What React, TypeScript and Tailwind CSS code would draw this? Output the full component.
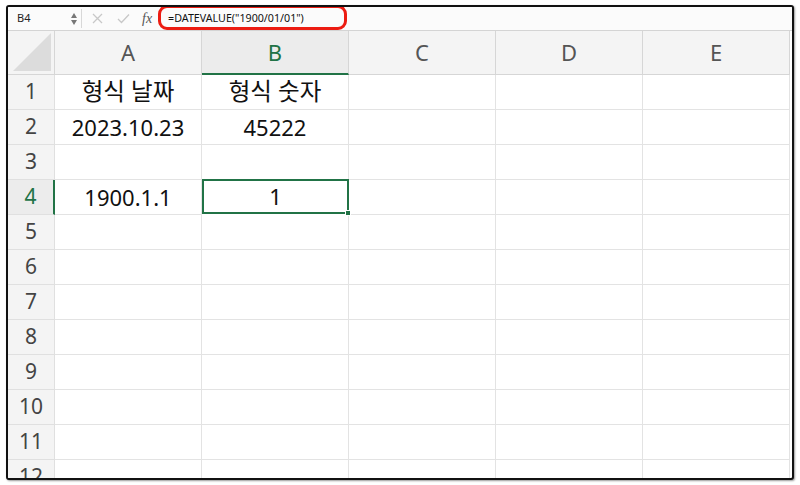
import React from "react";

const cols = ["A", "B", "C", "D", "E"];
const rows = [1, 2, 3, 4, 5, 6, 7, 8, 9, 10, 11, 12];
const data: Record<string, string> = {
  "1A": "형식 날짜",
  "1B": "형식 숫자",
  "2A": "2023.10.23",
  "2B": "45222",
  "4A": "1900.1.1",
  "4B": "1",
};

const font = { fontFamily: '"Noto Sans", "Noto Sans CJK KR", sans-serif' };

export default function App() {
  return (
    <div className="w-[800px] h-[485px] bg-white relative overflow-hidden" style={font}>
      <div className="absolute left-[6px] top-[5px] w-[788px] h-[475px] border-2 border-[#111] rounded-[3px] overflow-hidden bg-white shadow-[1px_1px_2px_rgba(0,0,0,0.4)]">
        {/* formula bar */}
        <div className="h-[24px] flex items-center bg-[#fbfbfb] border-b border-[#d4d4d4] relative">
          <div className="w-[73px] flex items-center justify-between pl-[9px] pr-[4px] h-full">
            <span className="text-[11px] text-[#222]">B4</span>
            <div className="flex flex-col items-center leading-none">
              <svg width="6" height="5" viewBox="0 0 6 5"><path d="M0 5 L3 0 L6 5Z" fill="#777" /></svg>
              <svg width="6" height="5" viewBox="0 0 6 5" className="mt-[2px]"><path d="M0 0 L3 5 L6 0Z" fill="#777" /></svg>
            </div>
          </div>
          <div className="w-px h-[19px] bg-[#d8d8d8]" />
          <div className="flex items-center ml-[10px] gap-[14px]">
            <svg width="11" height="11" viewBox="0 0 11 11"><path d="M1 1 L10 10 M10 1 L1 10" stroke="#c8c8c8" strokeWidth="1.3" /></svg>
            <svg width="13" height="11" viewBox="0 0 13 11"><path d="M1 6 L4.5 9.5 L12 1.5" stroke="#c8c8c8" strokeWidth="1.3" fill="none" /></svg>
            <span className="text-[14px] italic text-[#555] -ml-[2px]" style={{ fontFamily: '"Liberation Serif", serif' }}>fx</span>
          </div>
          <span className="ml-[16px] text-[10.7px] text-[#111]">=DATEVALUE("1900/01/01")</span>
          <div className="absolute left-[150px] top-[-2px] w-[189px] h-[25px] border-[3px] border-[#ec1c12] rounded-[9px]" />
        </div>
        {/* grid */}
        <div className="grid grid-cols-[47px_147px_147px_147px_147px_147px]">
          {/* header row */}
          <div className="h-[44px] bg-[#f4f4f4] border-r border-b border-[#d6d6d6] relative">
            <svg className="absolute right-[3px] bottom-[3px]" width="38" height="38" viewBox="0 0 38 38"><path d="M38 0 L38 38 L0 38Z" fill="#dcdcdc" /></svg>
          </div>
          {cols.map((c) => (
            <div
              key={c}
              className={
                c === "B"
                  ? "h-[44px] bg-[#ececec] border-r border-[#d6d6d6] border-b-2 border-b-[#217346] flex items-center justify-center text-[22px] text-[#217346]"
                  : "h-[44px] bg-[#f4f4f4] border-r border-b border-[#d6d6d6] flex items-center justify-center text-[22px] text-[#555]"
              }
            >
              {c}
            </div>
          ))}
          {rows.map((r) => (
            <React.Fragment key={r}>
              <div
                className={
                  r === 4
                    ? "h-[35px] bg-[#ececec] border-b border-[#e0e0e0] border-r-2 border-r-[#217346] flex items-center justify-center text-[21px] text-[#217346]"
                    : "h-[35px] bg-[#f4f4f4] border-r border-b border-[#e0e0e0] flex items-center justify-center text-[21px] text-[#444]"
                }
              >
                {r}
              </div>
              {cols.map((c) => {
                const sel = r === 4 && c === "B";
                const v = data[`${r}${c}`] ?? "";
                const korean = r === 1 && v !== "";
                return (
                  <div
                    key={c}
                    className={
                      (sel
                        ? "h-[35px] border-2 border-[#217346] -mt-px flex items-center justify-center text-[#111] relative"
                        : "h-[35px] border-r border-b border-[#e3e3e3] flex items-center justify-center text-[#111]") +
                      (korean ? " text-[23.5px]" : " text-[22px]")
                    }
                  >
                    {v}
                    {sel && <div className="absolute right-[-4px] bottom-[-4px] w-[6px] h-[6px] bg-[#217346] border border-white" />}
                  </div>
                );
              })}
            </React.Fragment>
          ))}
        </div>
      </div>
    </div>
  );
}
